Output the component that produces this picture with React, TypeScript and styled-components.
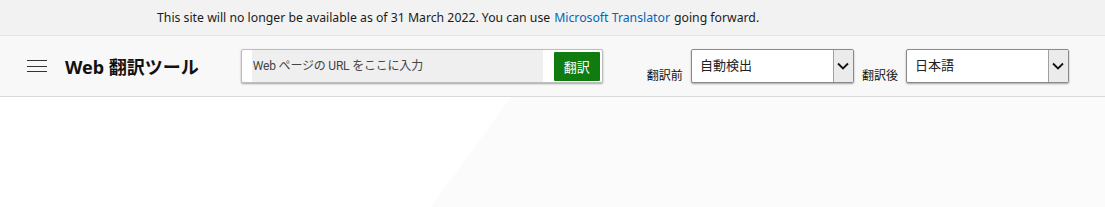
import React from 'react';
import styled, { createGlobalStyle } from 'styled-components';

const GlobalStyle = createGlobalStyle`
  html, body {
    margin: 0;
    padding: 0;
    background: #ffffff;
    font-family: "Noto Sans", "Noto Sans CJK JP", sans-serif;
  }
`;

const Page = styled.div`
  position: relative;
  width: 1105px;
  height: 207px;
  overflow: hidden;
  background: #ffffff;
`;

// faint diagonal panel behind the content area
const Backdrop = styled.div`
  position: absolute;
  inset: 0;
  background: #fbfbfb;
  clip-path: polygon(511px 97px, 1105px 97px, 1105px 207px, 431px 207px);
`;

const Banner = styled.div`
  position: relative;
  height: 36px;
  box-sizing: border-box;
  background: #f2f2f2;
  border-bottom: 1px solid #e3e3e3;
  display: flex;
  align-items: center;
  padding-left: 157px;
  font-size: 12.25px;
  color: #1a1a1a;
`;

const BannerLink = styled.a`
  color: #0067b8;
  text-decoration: none;
  margin: 0 4px;
`;

const Header = styled.header`
  position: relative;
  height: 61px;
  box-sizing: border-box;
  background: #f8f8f8;
  border-bottom: 1px solid #d9d9d9;
  display: flex;
  align-items: center;
  padding-left: 27px;
`;

const Burger = styled.button`
  width: 20px;
  height: 12px;
  padding: 0;
  border: none;
  background: transparent;
  display: flex;
  flex-direction: column;
  justify-content: space-between;
  margin-right: 18px;

  span {
    display: block;
    height: 1px;
    background: #333;
  }
`;

const Title = styled.h1`
  margin: 0 42px 0 0;
  font-size: 18px;
  font-weight: 700;
  color: #111;
  white-space: nowrap;
`;

const SearchBox = styled.div`
  width: 362px;
  height: 34px;
  box-sizing: border-box;
  border: 1px solid #bdbdbd;
  border-radius: 2px;
  background: #fff;
  box-shadow: 0 1px 2px rgba(0, 0, 0, 0.35);
  display: flex;
  align-items: center;
  padding: 0 2px 0 10px;
  margin-right: 44px;
`;

const UrlInput = styled.input`
  flex: 1;
  min-width: 0;
  height: 32px;
  border: none;
  outline: none;
  background: #efefef;
  margin-right: 11px;
  padding: 0 0 0 1px;
  font-family: Roboto, "Noto Sans CJK JP", sans-serif;
  font-size: 12px;
  letter-spacing: -0.2px;
  color: #444;

  &::placeholder {
    color: #444;
  }
`;

const GoButton = styled.button`
  width: 46px;
  height: 29px;
  border: none;
  border-radius: 1px;
  background: #107c10;
  color: #fff;
  font-family: "Noto Sans CJK JP", sans-serif;
  font-size: 13px;
  padding: 0;
`;

const LangGroup = styled.div`
  display: flex;
  align-items: flex-end;
  gap: 8px;
  margin-right: 8px;
`;

const LangLabel = styled.label`
  font-family: "Noto Sans CJK JP", sans-serif;
  font-size: 12px;
  color: #111;
  line-height: 14px;
  margin-bottom: 1px;
`;

const Select = styled.div`
  width: 163px;
  height: 34px;
  box-sizing: border-box;
  border: 1px solid #8a8a8a;
  border-radius: 2px;
  background: #fff;
  box-shadow: 0 1px 2px rgba(0, 0, 0, 0.35);
  display: flex;
  align-items: stretch;
  font-family: "Noto Sans CJK JP", sans-serif;
  font-size: 13px;
  color: #222;
`;

const SelectValue = styled.span`
  flex: 1;
  display: flex;
  align-items: center;
  padding-left: 8px;
  padding-bottom: 3px;
`;

const Arrow = styled.span`
  width: 19px;
  border-left: 1px solid #a0a0a0;
  background: #ebebeb;
  display: flex;
  align-items: center;
  justify-content: center;
`;

const Chevron = () => (
  <svg width="12" height="8" viewBox="0 0 12 8">
    <path d="M1 1.5 L6 6.5 L11 1.5" fill="none" stroke="#111" strokeWidth="1.8" />
  </svg>
);

const languages = [
  { label: '翻訳前', value: '自動検出' },
  { label: '翻訳後', value: '日本語' },
];

export default function App() {
  return (
    <>
      <GlobalStyle />
      <Page>
        <Backdrop />
        <Banner>
          This site will no longer be available as of 31 March 2022. You can use
          <BannerLink href="#">Microsoft Translator</BannerLink>
          going forward.
        </Banner>
        <Header>
          <Burger aria-label="menu">
            <span />
            <span />
            <span />
          </Burger>
          <Title>Web 翻訳ツール</Title>
          <SearchBox>
            <UrlInput placeholder="Web ページの URL をここに入力" />
            <GoButton>翻訳</GoButton>
          </SearchBox>
          {languages.map((l) => (
            <LangGroup key={l.label}>
              <LangLabel>{l.label}</LangLabel>
              <Select>
                <SelectValue>{l.value}</SelectValue>
                <Arrow>
                  <Chevron />
                </Arrow>
              </Select>
            </LangGroup>
          ))}
        </Header>
      </Page>
    </>
  );
}
